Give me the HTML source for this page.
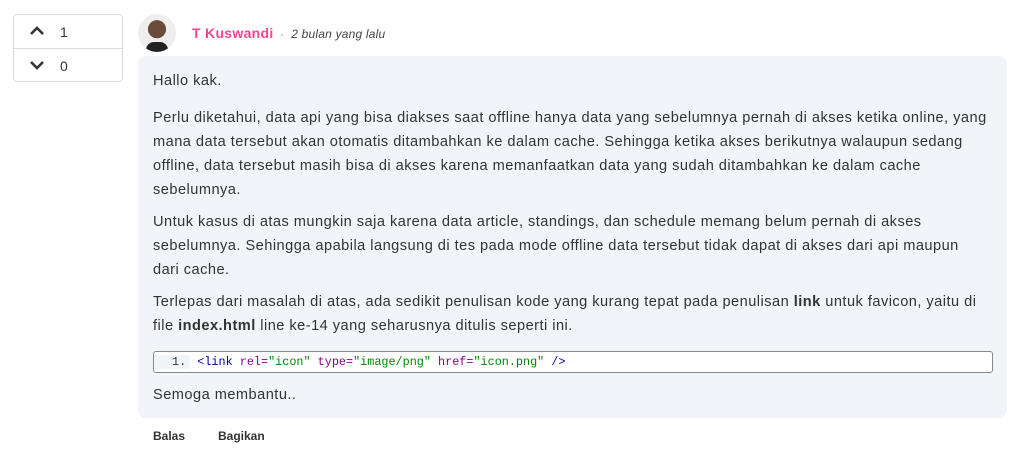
<!DOCTYPE html>
<html><head><meta charset="utf-8"><style>
body{margin:0;background:#fff;font-family:"Liberation Sans",sans-serif;color:#333;width:1024px;height:459px;overflow:hidden;position:relative}
.vote{position:absolute;left:13px;top:14px;width:108px;height:66px;border:1px solid #d9d9d9;border-radius:4px}
.vote div{height:33px;position:relative;font-size:14px}
.vote div+div{border-top:1px solid #d9d9d9}
.vote svg{position:absolute;left:15px;top:10px}
.vote span{position:absolute;left:46px;top:9px}
.av{position:absolute;left:138px;top:14px;width:38px;height:38px;border-radius:50%;background:radial-gradient(circle at 50% 40%,#6b4a3a 0 30%,#eee 31%);overflow:hidden}
.av:after{content:"";position:absolute;left:8px;top:28px;width:22px;height:14px;background:#222;border-radius:8px 8px 0 0}
.name{position:absolute;left:192px;top:25px;font-size:14px;font-weight:bold;color:#f0468a;letter-spacing:.3px}
.time{position:absolute;left:280px;top:27px;font-size:12px;font-style:italic;color:#444;letter-spacing:.2px}
.box{position:absolute;left:138px;top:56px;width:869px;height:362px;background:#f1f4f8;border-radius:8px}
.t{position:absolute;left:153px;font-size:14.6px;line-height:24px;color:#333;white-space:nowrap;letter-spacing:.47px}
.code{position:absolute;left:153px;top:351px;width:838px;height:20px;border:1px solid #888;border-radius:3px;background:#fff;font-family:"Liberation Mono",monospace;font-size:11.8px;line-height:20px}
.a{font-size:12px;font-weight:bold;position:absolute;top:429px;color:#333}
</style></head><body>
<div class="vote"><div><svg width="16" height="12" viewBox="0 0 16 12"><path d="M2 9L8 3L14 9" fill="none" stroke="#333" stroke-width="2.6"/></svg><span>1</span></div><div><svg width="16" height="12" viewBox="0 0 16 12"><path d="M2 3L8 9L14 3" fill="none" stroke="#333" stroke-width="2.6"/></svg><span>0</span></div></div>
<div class="av"></div>
<div class="name">T Kuswandi</div><div class="time"><span style="font-style:normal;color:#888">·</span>&nbsp; 2 bulan yang lalu</div>
<div class="box"></div>
<div class="t" style="top:69px">Hallo kak.</div>
<div class="t" style="top:106px">Perlu diketahui, data api yang bisa diakses saat offline hanya data yang sebelumnya pernah di akses ketika online, yang<br>mana data tersebut akan otomatis ditambahkan ke dalam cache. Sehingga ketika akses berikutnya walaupun sedang<br>offline, data tersebut masih bisa di akses karena memanfaatkan data yang sudah ditambahkan ke dalam cache<br>sebelumnya.</div>
<div class="t" style="top:210px">Untuk kasus di atas mungkin saja karena data article, standings, dan schedule memang belum pernah di akses<br>sebelumnya. Sehingga apabila langsung di tes pada mode offline data tersebut tidak dapat di akses dari api maupun<br>dari cache.</div>
<div class="t" style="top:290px">Terlepas dari masalah di atas, ada sedikit penulisan kode yang kurang tepat pada penulisan <b>link</b> untuk favicon, yaitu di<br>file <b>index.html</b> line ke-14 yang seharusnya ditulis seperti ini.</div>
<div class="code"><span style="background:#f1f4f8;padding:0 4px 0 18px;color:#333">1.</span> <span style="color:#009">&lt;link</span> <span style="color:#808">rel=</span><span style="color:#080">"icon"</span> <span style="color:#808">type=</span><span style="color:#080">"image/png"</span> <span style="color:#808">href=</span><span style="color:#080">"icon.png"</span> <span style="color:#009">/&gt;</span></div>
<div class="t" style="top:383px">Semoga membantu..</div>
<div class="a" style="left:153px">Balas</div><div class="a" style="left:218px">Bagikan</div>
</body></html>
